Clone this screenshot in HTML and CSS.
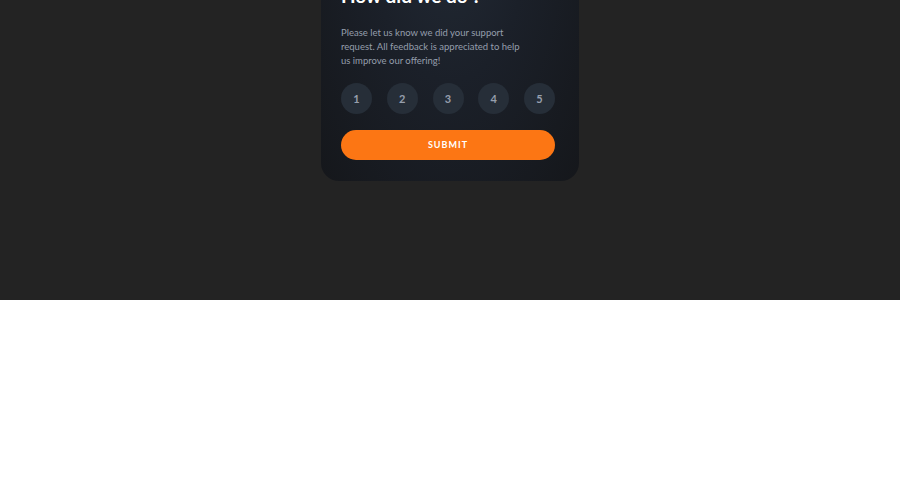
FILE: index.html
```html
<!DOCTYPE html>
<html lang="en">
<head>
    <meta charset="UTF-8">
    <meta name="viewport" content="width=device-width, initial-scale=1.0">
    <title>Rating</title>
    <link rel="stylesheet" href="styles.css">
</head>

<body>
    <!-- 评分卡片区域 -->
    <div class="stage">
        <div class="card">
            <div class="star">
                <svg width="14" height="14" viewBox="0 0 17 16"><path d="M9.067.43l1.99 4.031c.112.228.33.386.58.422l4.45.647a.772.772 0 0 1 .427 1.316l-3.22 3.138a.773.773 0 0 0-.222.683l.76 4.431a.772.772 0 0 1-1.12.813l-3.98-2.092a.773.773 0 0 0-.718 0l-3.98 2.092a.772.772 0 0 1-1.12-.813l.76-4.431a.77.77 0 0 0-.222-.683L.792 6.846A.772.772 0 0 1 1.220 5.530l4.45-.647a.772.772 0 0 0 .58-.422L8.24.43a.772.772 0 0 1 1.327 0z" fill="#FC7614"/></svg>
            </div>
            <h1 class="title">How did we do ?</h1>
            <p class="desc">Please let us know we did your support request. All feedback is appreciated to help us improve our offering!</p>
            <!-- 分数按钮 -->
            <div class="rates">
                <span>1</span>
                <span>2</span>
                <span>3</span>
                <span>4</span>
                <span>5</span>
            </div>
            <a class="btnSubmit" href="javascript:;">SUBMIT</a>
        </div>
    </div>
</body>

</html>
```

FILE: styles.css
```css
* {
    padding: 0;
    margin: 0;
    box-sizing: border-box;
}

body {
    background-color: #fff;
    font-family: "Lato", "Noto Sans", sans-serif;
}

.stage {
    height: 300px;
    background-color: #232323;
    display: flex;
    justify-content: center;
    align-items: flex-start;
    overflow: hidden;
}

.card {
    width: 258px;
    margin-top: -93px;
    padding: 20px 24px 21px 20px;
    border-radius: 18px;
    background: radial-gradient(ellipse at 50% 0%, #232b36 0%, #1b2029 45%, #15171b 100%);
}

.card .star {
    width: 36px;
    height: 36px;
    border-radius: 50%;
    background-color: #262e38;
    display: flex;
    justify-content: center;
    align-items: center;
    margin-bottom: 22px;
}

.card .title {
    color: #fff;
    font-size: 19px;
    line-height: 22px;
    font-weight: 700;
    margin-bottom: 19px;
}

.card .desc {
    color: #959eac;
    font-size: 9.5px;
    line-height: 14px;
    width: 182px;
}

.card .rates {
    display: flex;
    justify-content: space-between;
    margin-top: 15px;
}

.card .rates span {
    width: 31px;
    height: 31px;
    border-radius: 50%;
    background-color: #262e38;
    color: #969fad;
    font-size: 11px;
    font-weight: 700;
    display: flex;
    justify-content: center;
    align-items: center;
}

.card .btnSubmit {
    display: block;
    margin-top: 16px;
    height: 30px;
    line-height: 30px;
    border-radius: 15px;
    background-color: #fc7614;
    color: #fff;
    text-align: center;
    text-decoration: none;
    font-size: 9px;
    font-weight: 700;
    letter-spacing: 1px;
}
```
